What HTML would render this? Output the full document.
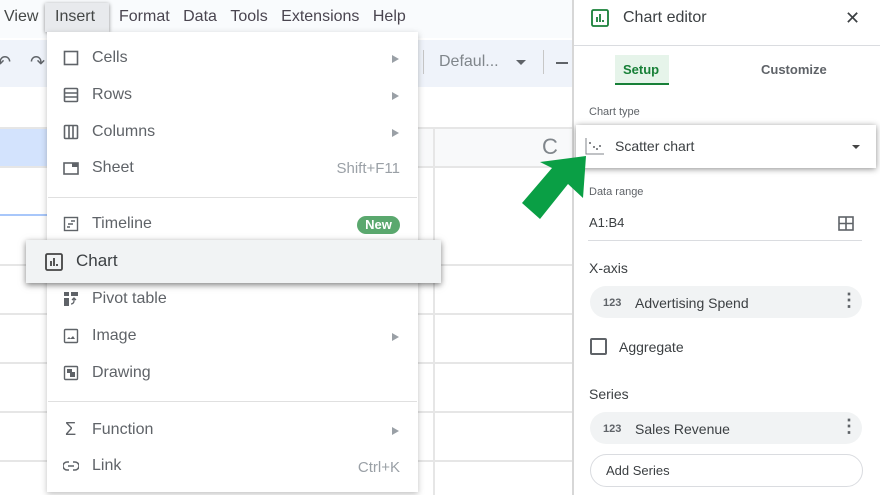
<!DOCTYPE html>
<html><head><style>
*{margin:0;padding:0;box-sizing:border-box}
body{width:880px;height:495px;overflow:hidden;position:relative;background:#fff;font-family:"Liberation Sans",Arial,sans-serif;color:#3c4043}
.a{position:absolute}
.hl{position:absolute;left:0;width:572px;height:2px;background:#e6e6e6}
.mi{position:absolute;left:63px;font-size:16px;color:#5f6368;height:20px;line-height:20px}
.mi span{position:absolute;left:29px;white-space:nowrap}
.ico{position:absolute;left:0;top:2px;width:16px;height:16px}
.arr{position:absolute;left:392px;width:0;height:0;border-left:7px solid #9aa0a6;border-top:4px solid transparent;border-bottom:4px solid transparent}
.sc{position:absolute;font-size:15px;color:#9aa0a6;text-align:right;width:120px;left:280px}
.pl{position:absolute;font-size:11px;color:#5f6368}
.pill{position:absolute;left:590px;width:272px;height:32px;border-radius:16px;background:#f1f3f4;font-size:14px;color:#3c4043}
</style></head><body>
<div class="a" style="left:0;top:0;width:572px;height:38px;background:#f9fbfd"></div>
<div class="a" style="top:8px;left:4px;font-size:16px;color:#444746">View</div>
<div class="a" style="left:45px;top:3px;width:64px;height:29px;background:#e8eaed;box-shadow:0 1px 4px rgba(0,0,0,.45)"></div>
<div class="a" style="top:8px;left:55px;font-size:16px;color:#444746">Insert</div>
<div class="a" style="top:8px;left:119px;font-size:16px;color:#4a4550;word-spacing:9px">Format&nbsp;Data&nbsp;Tools&nbsp;Extensions&nbsp;Help</div>
<div class="a" style="left:0;top:40px;width:572px;height:47px;background:#eff3fa"></div>
<div class="a" style="left:-4px;top:52px;font-size:18px;color:#5f6368">↶</div>
<div class="a" style="left:30px;top:52px;font-size:18px;color:#5f6368">↷</div>
<div class="a" style="left:423px;top:50px;width:1px;height:24px;background:#c7c7c7"></div>
<div class="a" style="left:439px;top:53px;font-size:16px;color:#80868b">Defaul...</div>
<div class="a" style="left:516px;top:60px;border-left:5px solid transparent;border-right:5px solid transparent;border-top:5px solid #5f6368"></div>
<div class="a" style="left:543px;top:50px;width:1px;height:24px;background:#c7c7c7"></div>
<div class="a" style="left:556px;top:62px;width:12px;height:2px;background:#5f6368"></div>
<div class="a" style="left:0;top:128px;width:572px;height:39px;background:#f8f9fa"></div>
<div class="a" style="left:0;top:128px;width:48px;height:39px;background:#d3e3fd"></div>
<div class="hl" style="top:127px"></div>
<div class="hl" style="top:166px"></div>
<div class="a" style="left:0;top:214px;width:48px;height:2px;background:#a8c7fa"></div>
<div class="hl" style="top:264px"></div><div class="hl" style="top:313px"></div><div class="hl" style="top:362px"></div><div class="hl" style="top:411px"></div><div class="hl" style="top:460px"></div>
<div class="a" style="left:433px;top:128px;width:2px;height:367px;background:#e6e6e6"></div>
<div class="a" style="left:542px;top:134px;font-size:22px;color:#80868b">C</div>
<div class="a" style="left:47px;top:32px;width:371px;height:460px;background:#fff;box-shadow:0 2px 6px rgba(0,0,0,.25)"></div>
<div class="a" style="left:48px;top:197px;width:369px;height:1px;background:#e0e0e0"></div>
<div class="a" style="left:48px;top:401px;width:369px;height:1px;background:#e0e0e0"></div>
<div class="mi" style="top:48px"><svg class="ico" viewBox="0 0 16 16"><rect x="1.5" y="1.5" width="13" height="13" fill="none" stroke="#5f6368" stroke-width="1.6"/></svg><span>Cells</span></div>
<div class="arr" style="top:55px"></div>
<div class="mi" style="top:85px"><svg class="ico" viewBox="0 0 16 16"><rect x="1.5" y="1.5" width="13" height="13" rx="1" fill="none" stroke="#5f6368" stroke-width="1.6"/><path d="M2 6h12M2 10h12" stroke="#5f6368" stroke-width="1.6"/></svg><span>Rows</span></div>
<div class="arr" style="top:92px"></div>
<div class="mi" style="top:122px"><svg class="ico" viewBox="0 0 16 16"><rect x="1.5" y="1.5" width="13" height="13" rx="1" fill="none" stroke="#5f6368" stroke-width="1.6"/><path d="M6 2v12M10 2v12" stroke="#5f6368" stroke-width="1.6"/></svg><span>Columns</span></div>
<div class="arr" style="top:129px"></div>
<div class="mi" style="top:158px"><svg class="ico" viewBox="0 0 16 16"><rect x="1" y="3" width="14" height="11" fill="none" stroke="#5f6368" stroke-width="1.6"/><rect x="9" y="3" width="6" height="4" fill="#5f6368"/></svg><span>Sheet</span></div>
<div class="sc" style="top:160px">Shift+F11</div>
<div class="mi" style="top:214px"><svg class="ico" viewBox="0 0 16 16"><rect x="1.5" y="1.5" width="13" height="13" fill="none" stroke="#5f6368" stroke-width="1.4"/><path d="M8 5h4M5 8h5M4 11h3" stroke="#5f6368" stroke-width="1.4"/></svg><span>Timeline</span></div>
<div class="a" style="left:357px;top:216px;width:43px;height:18px;border-radius:9px;background:#5aa86e;color:#fff;font-size:13px;font-weight:bold;text-align:center;line-height:18px">New</div>
<div class="mi" style="top:289px"><svg class="ico" viewBox="0 0 16 16"><rect x="1" y="1" width="5" height="4" fill="#5f6368"/><rect x="8" y="1" width="7" height="4" fill="#5f6368"/><rect x="1" y="7" width="5" height="8" fill="#5f6368"/><path d="M9 9l2-2 2 2M11 7v3a3 3 0 0 1-3 3" fill="none" stroke="#5f6368" stroke-width="1.3"/></svg><span>Pivot table</span></div>
<div class="mi" style="top:326px"><svg class="ico" viewBox="0 0 16 16"><rect x="1.5" y="1.5" width="13" height="13" rx="1" fill="none" stroke="#5f6368" stroke-width="1.4"/><path d="M4 11l2-2 1.5 1.5L10 8l2 3z" fill="#5f6368"/></svg><span>Image</span></div>
<div class="arr" style="top:333px"></div>
<div class="mi" style="top:363px"><svg class="ico" viewBox="0 0 16 16"><rect x="1.5" y="1.5" width="13" height="13" rx="1" fill="none" stroke="#5f6368" stroke-width="1.4"/><rect x="4" y="4" width="5" height="4" fill="#5f6368"/><rect x="7" y="7" width="5" height="5" fill="#5f6368"/></svg><span>Drawing</span></div>
<div class="mi" style="top:420px"><span style="left:2px;font-size:18px;top:-1px">Σ</span><span>Function</span></div>
<div class="arr" style="top:427px"></div>
<div class="mi" style="top:456px"><svg class="ico" viewBox="0 0 16 16"><path d="M6 4H4a4 4 0 0 0 0 8h2M10 4h2a4 4 0 0 1 0 8h-2M5 8h6" fill="none" stroke="#5f6368" stroke-width="1.5"/></svg><span>Link</span></div>
<div class="sc" style="top:459px">Ctrl+K</div>
<div class="a" style="left:26px;top:240px;width:415px;height:43px;background:#f1f3f4;box-shadow:0 2px 6px rgba(0,0,0,.5)"></div>
<svg class="a" style="left:45px;top:253px" width="18" height="18" viewBox="0 0 18 18"><rect x="1" y="1" width="16" height="16" rx="1.5" fill="none" stroke="#444" stroke-width="1.8"/><path d="M6 13V8M9 13V5M12 13v-2" stroke="#444" stroke-width="1.8"/></svg>
<div class="a" style="left:76px;top:251px;font-size:17px;color:#3c4043">Chart</div>
<div class="a" style="left:572px;top:0;width:308px;height:495px;background:#fff;border-left:2px solid #d7d7d7"></div>
<svg class="a" style="left:591px;top:9px" width="18" height="18" viewBox="0 0 18 18"><rect x="1" y="1" width="16" height="16" rx="1.5" fill="none" stroke="#188038" stroke-width="1.8"/><path d="M6 13V8M9 13V5M12 13v-2" stroke="#188038" stroke-width="1.8"/></svg>
<div class="a" style="left:623px;top:9px;font-size:16px;color:#3c4043">Chart editor</div>
<div class="a" style="left:845px;top:8px;font-size:18px;color:#3c4043">✕</div>
<div class="a" style="left:574px;top:45px;width:306px;height:1px;background:#dadce0"></div>
<div class="a" style="left:615px;top:55px;width:54px;height:30px;background:#e6f4ea;border-bottom:2px solid #188038"></div>
<div class="a" style="left:623px;top:62px;font-size:13px;font-weight:bold;color:#188038">Setup</div>
<div class="a" style="left:761px;top:62px;font-size:13px;font-weight:bold;color:#5f6368">Customize</div>
<div class="pl" style="left:589px;top:106px">Chart type</div>
<div class="a" style="left:576px;top:125px;width:300px;height:43px;background:#fff;box-shadow:0 1px 6px rgba(0,0,0,.45)"></div>
<svg class="a" style="left:585px;top:137px" width="20" height="20" viewBox="0 0 20 20"><path d="M1 1v16h18" fill="none" stroke="#80868b" stroke-width="1"/><circle cx="5" cy="6" r="1" fill="#5f6368"/><circle cx="9" cy="10" r="1" fill="#5f6368"/><circle cx="12" cy="12" r="1" fill="#5f6368"/><circle cx="15" cy="9" r="1" fill="#5f6368"/></svg>
<div class="a" style="left:615px;top:138px;font-size:14px;color:#3c4043">Scatter chart</div>
<div class="a" style="left:852px;top:145px;border-left:4px solid transparent;border-right:4px solid transparent;border-top:4px solid #444"></div>
<div class="pl" style="left:589px;top:186px">Data range</div>
<div class="a" style="left:589px;top:215px;font-size:13px;color:#3c4043">A1:B4</div>
<svg class="a" style="left:838px;top:216px" width="16" height="15" viewBox="0 0 16 15"><rect x="1" y="1" width="14" height="13" fill="none" stroke="#5f6368" stroke-width="1.6"/><path d="M8 1v13M1 7.5h14" stroke="#5f6368" stroke-width="1.6"/></svg>
<div class="a" style="left:588px;top:240px;width:274px;height:1px;background:#dadce0"></div>
<div class="a" style="left:589px;top:260px;font-size:14px;color:#3c4043">X-axis</div>
<div class="pill" style="top:286px"><span class="a" style="left:13px;top:11px;font-size:11px;font-weight:bold;color:#5f6368">123</span><span class="a" style="left:45px;top:9px">Advertising Spend</span><span class="a" style="left:250px;top:4px;font-size:18px;color:#5f6368;font-weight:bold">⋮</span></div>
<div class="a" style="left:590px;top:338px;width:17px;height:17px;border:2px solid #5f6368;border-radius:2px"></div>
<div class="a" style="left:619px;top:339px;font-size:14px;color:#3c4043">Aggregate</div>
<div class="a" style="left:589px;top:386px;font-size:14px;color:#3c4043">Series</div>
<div class="pill" style="top:412px"><span class="a" style="left:13px;top:11px;font-size:11px;font-weight:bold;color:#5f6368">123</span><span class="a" style="left:45px;top:9px">Sales Revenue</span><span class="a" style="left:250px;top:4px;font-size:18px;color:#5f6368;font-weight:bold">⋮</span></div>
<div class="a" style="left:590px;top:454px;width:273px;height:33px;border:1px solid #dadce0;border-radius:17px"><span class="a" style="left:15px;top:8px;font-size:13px;color:#3c4043">Add Series</span></div>
<svg class="a" style="left:0;top:0" width="880" height="495"><polygon points="586,156 583,198 568,184 540,219 522,203 552,168 540,162" fill="#0a9f45"/></svg>
</body></html>
